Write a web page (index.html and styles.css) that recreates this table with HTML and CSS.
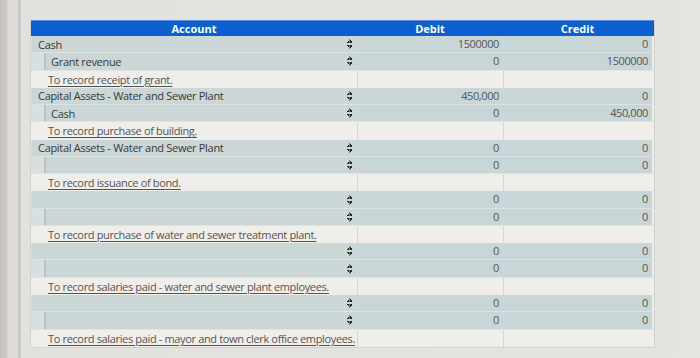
FILE: index.html
```html
<!DOCTYPE html>
<html>
<head>
<meta charset="utf-8">
<link rel="stylesheet" href="styles.css">
</head>
<body>
<div class="journal">
  <div class="head">
    <div class="h">Account</div>
    <div class="h">Debit</div>
    <div class="h">Credit</div>
  </div>

  <div class="row entry">
    <div class="acct"><div class="select">Cash<span class="arrows"></span></div></div>
    <div class="num">1500000</div><div class="num">0</div>
  </div>
  <div class="row entry">
    <div class="acct indent"><div class="select">Grant revenue<span class="arrows"></span></div></div>
    <div class="num">0</div><div class="num">1500000</div>
  </div>
  <div class="row memo">
    <div class="acct"><span class="note">To record receipt of grant.</span></div>
    <div class="num"></div><div class="num"></div>
  </div>

  <div class="row entry">
    <div class="acct"><div class="select">Capital Assets - Water and Sewer Plant<span class="arrows"></span></div></div>
    <div class="num">450,000</div><div class="num">0</div>
  </div>
  <div class="row entry">
    <div class="acct indent"><div class="select">Cash<span class="arrows"></span></div></div>
    <div class="num">0</div><div class="num">450,000</div>
  </div>
  <div class="row memo">
    <div class="acct"><span class="note">To record purchase of building.</span></div>
    <div class="num"></div><div class="num"></div>
  </div>

  <div class="row entry">
    <div class="acct"><div class="select">Capital Assets - Water and Sewer Plant<span class="arrows"></span></div></div>
    <div class="num">0</div><div class="num">0</div>
  </div>
  <div class="row entry">
    <div class="acct indent"><div class="select"><span class="arrows"></span></div></div>
    <div class="num">0</div><div class="num">0</div>
  </div>
  <div class="row memo">
    <div class="acct"><span class="note">To record issuance of bond.</span></div>
    <div class="num"></div><div class="num"></div>
  </div>

  <div class="row entry">
    <div class="acct"><div class="select"><span class="arrows"></span></div></div>
    <div class="num">0</div><div class="num">0</div>
  </div>
  <div class="row entry">
    <div class="acct indent"><div class="select"><span class="arrows"></span></div></div>
    <div class="num">0</div><div class="num">0</div>
  </div>
  <div class="row memo">
    <div class="acct"><span class="note">To record purchase of water and sewer treatment plant.</span></div>
    <div class="num"></div><div class="num"></div>
  </div>

  <div class="row entry">
    <div class="acct"><div class="select"><span class="arrows"></span></div></div>
    <div class="num">0</div><div class="num">0</div>
  </div>
  <div class="row entry">
    <div class="acct indent"><div class="select"><span class="arrows"></span></div></div>
    <div class="num">0</div><div class="num">0</div>
  </div>
  <div class="row memo">
    <div class="acct"><span class="note">To record salaries paid - water and sewer plant employees.</span></div>
    <div class="num"></div><div class="num"></div>
  </div>

  <div class="row entry">
    <div class="acct"><div class="select"><span class="arrows"></span></div></div>
    <div class="num">0</div><div class="num">0</div>
  </div>
  <div class="row entry">
    <div class="acct indent"><div class="select"><span class="arrows"></span></div></div>
    <div class="num">0</div><div class="num">0</div>
  </div>
  <div class="row memo">
    <div class="acct"><span class="note">To record salaries paid - mayor and town clerk office employees.</span></div>
    <div class="num"></div><div class="num"></div>
  </div>
</div>
</body>
</html>
```

FILE: styles.css
```css
html, body {
  margin: 0;
  padding: 0;
}
body {
  width: 700px;
  height: 358px;
  overflow: hidden;
  background: linear-gradient(to right, #c6c3bf 0, #cecbc7 7px, #dddbd7 8px, #dddbd7 18px, #c4c1bd 19px, #c4c1bd 20px, #e3e1dd 21px, #e6e4e0 100%);
  font-family: "Open Sans", "Liberation Sans", sans-serif;
  color: #3d3d3d;
  padding: 20px 0 0 30px;
  box-sizing: border-box;
}
.journal {
  width: 623px;
  border-left: 1px solid #d3d1cc;
  border-right: 1px solid #d3d1cc;
  border-bottom: 1px solid #d3d1cc;
  background: #eeece8;
}
.head {
  display: grid;
  grid-template-columns: 326px 146px 149px;
  height: 16px;
  background: #0b5fce;
  border-top: 1px solid #5c8fd9;
  box-sizing: border-box;
}
.h {
  color: #fff;
  font-weight: 700;
  font-size: 11px;
  line-height: 15px;
  text-align: center;
}
.row {
  display: grid;
  grid-template-columns: 326px 146px 149px;
  height: 17.28px;
  box-sizing: border-box;
}
.entry {
  border-bottom: 1px solid #dde3e2;
}
.acct {
  display: flex;
  padding-left: 1px;
  min-width: 0;
}
.entry .acct {
  background: #d9dfde;
}
.select {
  flex: 1;
  display: flex;
  align-items: center;
  justify-content: space-between;
  background: #cbd6d6;
  font-size: 11px;
  letter-spacing: -0.3px;
  color: #383838;
  padding: 0 5px 0 6px;
  white-space: nowrap;
}
.indent {
  padding-left: 13px;
}
.indent .select {
  border-left: 2px solid #b7c4c4;
  padding-left: 5px;
}
.arrows {
  width: 5px;
  height: 10px;
  background:
    linear-gradient(to bottom right, transparent 50%, #262929 50%) left top / 2.5px 4px no-repeat,
    linear-gradient(to bottom left, transparent 50%, #262929 50%) right top / 2.5px 4px no-repeat,
    linear-gradient(to top right, transparent 50%, #262929 50%) left bottom / 2.5px 4px no-repeat,
    linear-gradient(to top left, transparent 50%, #262929 50%) right bottom / 2.5px 4px no-repeat;
  margin-left: auto;
}
.num {
  border-left: 1px solid #d4d6d3;
  font-size: 11px;
  letter-spacing: -0.4px;
  color: #555;
  text-align: right;
  padding-right: 4px;
  line-height: 16px;
}
.entry .num {
  background: #c9d6d7;
}
.memo {
  background: #f0eeea;
}
.memo .acct {
  padding-left: 17px;
  align-items: center;
}
.note {
  font-size: 11px;
  letter-spacing: -0.35px;
  color: #545454;
  text-decoration: underline;
  text-underline-offset: 2px;
  white-space: nowrap;
}
```
